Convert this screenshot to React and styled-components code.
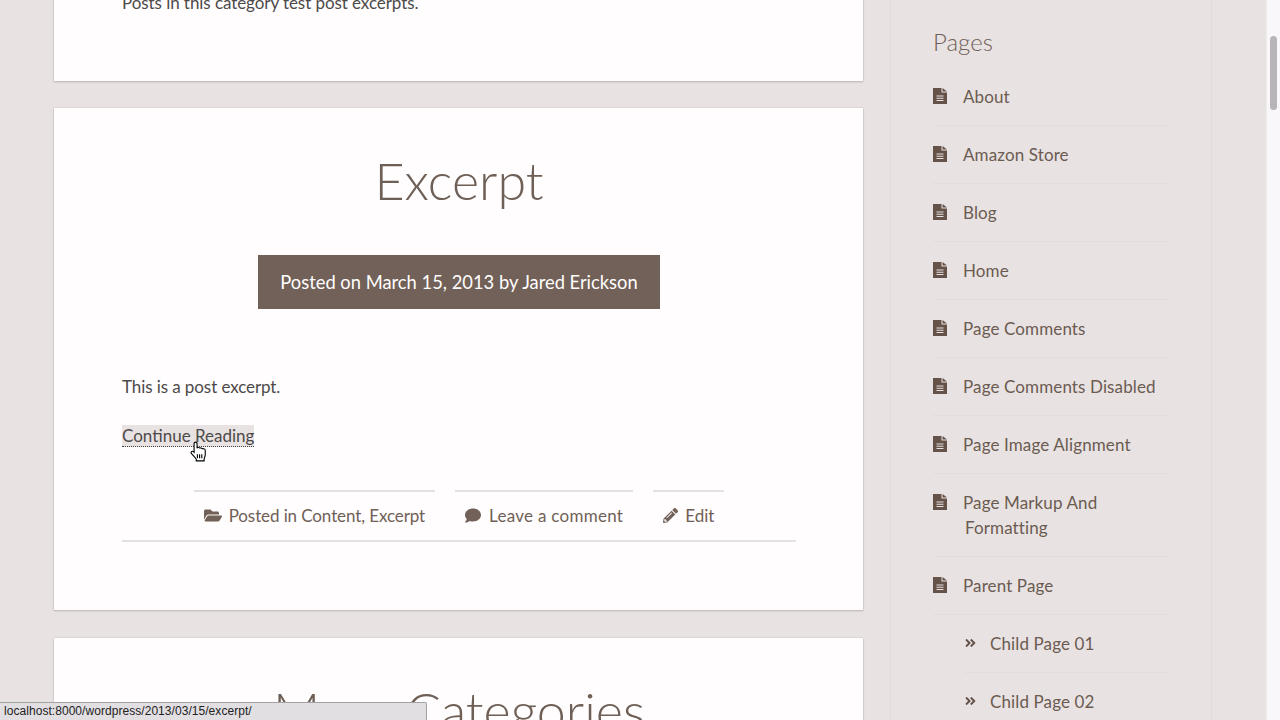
import React from 'react'
import styled, { createGlobalStyle } from 'styled-components'
import { FaFolderOpen, FaComment, FaPencilAlt, FaAngleDoubleRight } from 'react-icons/fa'

const GlobalStyle = createGlobalStyle`
  html, body {
    margin: 0;
    height: 100%;
    overflow: hidden;
  }
  body {
    background: #e8e2e2;
    color: #6f6057;
    font-family: Lato, "Open Sans", sans-serif;
    font-size: 18px;
  }
`

const Page = styled.div`
  display: flex;
  height: 720px;
  overflow: hidden;
  position: relative;
`

const Viewport = styled.div`
  flex: 1;
  display: flex;
  align-items: flex-start;
  padding-left: 54px;
  overflow: hidden;
`

const Main = styled.main`
  width: 809px;
  flex: none;
  margin-top: -30px;
  display: flex;
  flex-direction: column;
  gap: 27px;
`

const Card = styled.article`
  background: #fffdfd;
  box-shadow: 0 0 1px rgba(90, 70, 60, 0.35), 0 1px 2px rgba(90, 70, 60, 0.25);
  padding: ${props => props.clipped ? '20px 67px 66px 68px' : '42px 67px 68px 68px'};
  &:last-child {
    margin-top: 1px;
  }
`

const Title = styled.h1`
  margin: 0;
  font-size: 52px;
  font-weight: 300;
  line-height: 60px;
  word-spacing: -12px;
  text-align: center;
  color: #6f6057;
`

const Meta = styled.div`
  display: table;
  margin: 45px auto 0;
  padding: 0 22px;
  background: #716158;
  color: #fffdfd;
  font-size: 18.35px;
  line-height: 54px;
`

const Text = styled.p`
  margin: ${props => props.first ? '65px 0 0' : '24px 0 0'};
  font-size: 17px;
  letter-spacing: ${props => props.first ? '-0.09px' : '0'};
  line-height: 25px;
  color: #4d4a4a;
`

const ClippedText = styled(Text)`
  margin: 0;
  letter-spacing: -0.07px;
`

const MoreLink = styled.a`
  color: #4d4a4a;
  background: #e8e2e2;
  border-bottom: 1px dotted #444;
`

const Footer = styled.footer`
  display: flex;
  justify-content: center;
  gap: 20px;
  margin-top: 42px;
  border-bottom: 2px solid #e6e0de;
`

const FooterItem = styled.span`
  display: flex;
  align-items: center;
  gap: ${props => props.gap}px;
  height: 46px;
  padding: 0 10px 2px;
  border-top: 2px solid #e6e0de;
  font-size: 17px;
  letter-spacing: ${props => props.spacing || 0}px;
  color: #6f6057;
  svg {
    width: ${props => props.iconWidth}px;
    height: 17px;
    flex: none;
    fill: #716158;
  }
`

const Sidebar = styled.aside`
  width: 235px;
  flex: none;
  margin-left: 27px;
  min-height: 720px;
  padding: 24px 43px 0 42px;
  border-left: 1px solid #e2dcdc;
  border-right: 1px solid #e2dcdc;
`

const SidebarTitle = styled.h2`
  margin: 0 0 8px;
  font-size: 24px;
  font-weight: 300;
  line-height: 36px;
  color: #6f6057;
`

const List = styled.ul`
  margin: 0;
  padding: 0;
  list-style: none;
`

const Row = styled.li`
  display: flex;
  padding: 16px 0;
  margin-left: ${props => props.child ? '32px' : '0'};
  border-bottom: 1px solid #e2dcdc;
  font-size: 17px;
  letter-spacing: 0.12px;
  line-height: 25px;
  color: #6b5b51;
`

const RowIcon = styled.span`
  flex: none;
  width: ${props => props.child ? '25px' : '30px'};
  height: 23px;
  display: flex;
  align-items: center;
  svg {
    fill: #65534a;
    width: ${props => props.child ? '11px' : '14px'};
    height: ${props => props.child ? '14px' : '16px'};
  }
`

const RowLabel = styled.span`
  padding-left: ${props => props.child ? '0' : '2px'};
  text-indent: ${props => props.child ? '0' : '-2px'};
`

const ScrollTrack = styled.div`
  width: 14px;
  flex: none;
  box-sizing: border-box;
  padding: 36px 3px 0;
  background: #f9f7f9;
  border-left: 1px solid #efecee;
`

const ScrollThumb = styled.div`
  height: 74px;
  border-radius: 4px;
  background: #b8b4b8;
`

const StatusBubble = styled.div`
  position: absolute;
  left: 0;
  bottom: 0;
  width: 422px;
  height: 17px;
  padding-left: 4px;
  background: #e2dfe3;
  border-top: 1px solid #a5a2a4;
  border-right: 1px solid #a5a2a4;
  border-top-right-radius: 2px;
  font-family: "Liberation Sans", Arial, sans-serif;
  font-size: 12px;
  letter-spacing: 0.05px;
  line-height: 17px;
  color: #222;
`

const Pointer = styled.svg`
  position: absolute;
  left: 190px;
  top: 441px;
  width: 17px;
  height: 21px;
`

function PageIcon() {
  return (
    <svg viewBox="0 0 14 16">
      <path d="M0 0h8.500v4.500H14V16H0z" />
      <path d="M9.500 0 14 3.600H9.500z" />
      <path d="M3.500 7.500h7v1h-7zM3.500 9.800h7v1h-7zM3.500 12.100h7v1h-7z" fill="#e8e2e2" />
    </svg>
  )
}

const pages = [
  'About',
  'Amazon Store',
  'Blog',
  'Home',
  'Page Comments',
  'Page Comments Disabled',
  'Page Image Alignment',
  'Page Markup And Formatting',
  'Parent Page',
]

const childPages = ['Child Page 01', 'Child Page 02']

export default function App() {
  return (
    <Page>
      <GlobalStyle />
      <Viewport>
        <Main>
          <Card clipped>
            <ClippedText>Posts in this category test post excerpts.</ClippedText>
          </Card>
          <Card>
            <Title>Excerpt</Title>
            <Meta>Posted on March 15, 2013 by Jared Erickson</Meta>
            <Text first>This is a post excerpt.</Text>
            <Text><MoreLink>Continue Reading</MoreLink></Text>
            <Footer>
              <FooterItem iconWidth={18} gap={7} spacing={-0.1}><FaFolderOpen />Posted in Content, Excerpt</FooterItem>
              <FooterItem iconWidth={16} gap={8} spacing={0.27}><FaComment />Leave a comment</FooterItem>
              <FooterItem iconWidth={15} gap={7}><FaPencilAlt />Edit</FooterItem>
            </Footer>
          </Card>
          <Card>
            <Title>Menu Categories</Title>
          </Card>
        </Main>
        <Sidebar>
          <SidebarTitle>Pages</SidebarTitle>
          <List>
            {pages.map(name => (
              <Row key={name}>
                <RowIcon><PageIcon /></RowIcon>
                <RowLabel>{name}</RowLabel>
              </Row>
            ))}
            {childPages.map(name => (
              <Row child key={name}>
                <RowIcon child><FaAngleDoubleRight /></RowIcon>
                <RowLabel child>{name}</RowLabel>
              </Row>
            ))}
          </List>
        </Sidebar>
      </Viewport>
      <ScrollTrack>
        <ScrollThumb />
      </ScrollTrack>
      <StatusBubble>localhost:8000/wordpress/2013/03/15/excerpt/</StatusBubble>
      <Pointer viewBox="0 0 15 19">
        <path
          d="M3.500 2.200C3.500.6 6.200.6 6.200 2.200V6.500C6.200 5.600 8.700 5.600 8.700 6.800 8.700 6 11 6 11 7.400 11 6.600 13.600 6.800 13.600 8.400V12.500C13.600 14 13 15 12.600 16V18H5.500V16.500C4.500 15 3 13.500 1.200 11.500.2 10.200 1.600 8.600 3 9.600L3.500 10.200Z"
          fill="#fff"
          stroke="#000"
          strokeWidth="1"
        />
        <path d="M6.500 12v3.500M8.500 12v3.500M10.500 12v3.500" stroke="#000" strokeWidth="1" />
      </Pointer>
    </Page>
  )
}
